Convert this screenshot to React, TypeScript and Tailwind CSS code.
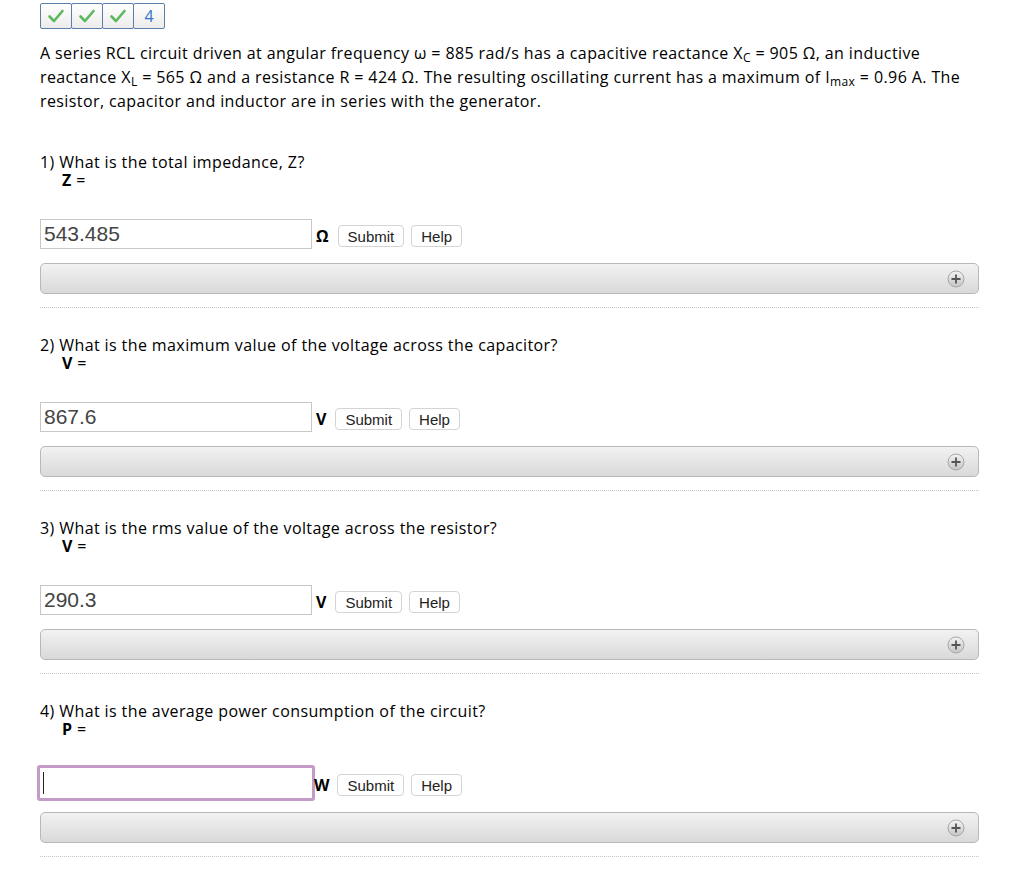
import React from "react";

const font = { fontFamily: '"Open Sans", "Noto Sans", sans-serif' };
const arial = { fontFamily: '"Liberation Sans", Arial, sans-serif' };

const Check = () => (
  <svg width="18" height="16" viewBox="0 0 18 16">
    <path d="M2.5 8.5 L7 13 L15.5 3" fill="none" stroke="#5cb85c" strokeWidth="2.6" strokeLinecap="round" strokeLinejoin="round" />
  </svg>
);

const Progress = () => (
  <div className="flex h-[26px] pl-[40px] pt-[3px] box-content">
    {[0, 1, 2].map((i) => (
      <div
        key={i}
        className="w-[32px] h-[26px] -ml-px first:ml-0 flex items-center justify-center border-[1.5px] border-[#5b7fa6] rounded-[2px] bg-gradient-to-b from-white to-[#ececec]"
      >
        <Check />
      </div>
    ))}
    <div className="w-[32px] h-[26px] -ml-px flex items-center justify-center border-[1.5px] border-[#5b7fa6] rounded-[2px] bg-gradient-to-b from-white to-[#ececec] text-[16px] text-[#3574c4]">
      4
    </div>
  </div>
);

const PlusIcon = () => (
  <svg width="18" height="18" viewBox="0 0 18 18">
    <defs>
      <linearGradient id="pg" x1="0" y1="0" x2="0" y2="1">
        <stop offset="0" stopColor="#f4f4f4" />
        <stop offset="1" stopColor="#c4c4c4" />
      </linearGradient>
    </defs>
    <circle cx="9" cy="9" r="8" fill="url(#pg)" stroke="#a8a8a8" strokeWidth="1" />
    <path d="M9 4.5 V13.5 M4.5 9 H13.5" stroke="#555" strokeWidth="1.8" />
  </svg>
);

type Q = {
  n: number;
  text: string;
  sym: string;
  value: string;
  unit: string;
  focused?: boolean;
};

const questions: Q[] = [
  { n: 1, text: "What is the total impedance, Z?", sym: "Z", value: "543.485", unit: "Ω" },
  { n: 2, text: "What is the maximum value of the voltage across the capacitor?", sym: "V", value: "867.6", unit: "V" },
  { n: 3, text: "What is the rms value of the voltage across the resistor?", sym: "V", value: "290.3", unit: "V" },
  { n: 4, text: "What is the average power consumption of the circuit?", sym: "P", value: "", unit: "W", focused: true },
];

const Question = ({ q }: { q: Q }) => (
  <div className="pt-[28px]">
    <p className="text-[16px] leading-[18px] text-black tracking-[0.4px]">
      {q.n}) {q.text}
    </p>
    <p className="text-[16px] leading-[18px] text-black pl-[22px] tracking-[0.4px]">
      <span className="font-bold">{q.sym}</span> =
    </p>

    {/* Answer row */}
    <div className="flex items-center h-[30px] mt-[30px]">
      {q.focused ? (
        <div className="w-[272px] h-[30px] flex items-center">
          <div className="-mx-[3px] w-[278px] h-[36px] rounded-[3px] border-[3px] border-[#c39bc6] bg-white flex items-center pl-[3px]">
            <div className="w-px h-[22px] bg-[#222]" />
          </div>
        </div>
      ) : (
        <div className="w-[272px] h-[30px] border border-[#c8c8c8] bg-white flex items-center pl-[3px] text-[21px] text-[#444]" style={arial}>
          {q.value}
        </div>
      )}
      <span className={`mt-[4px] font-bold text-[16px] text-black ${q.focused ? "ml-[2px] mr-[8px]" : "ml-[4px] mr-[9px]"}`}>
        {q.unit}
      </span>
      <button className="mt-[4px] h-[22px] px-[9px] rounded-[4px] border border-[#d4d4d4] bg-white text-[15px] text-[#222] leading-none" style={arial}>
        Submit
      </button>
      <button className="mt-[4px] ml-[7px] h-[22px] px-[9px] rounded-[4px] border border-[#d4d4d4] bg-white text-[15px] text-[#222] leading-none" style={arial}>
        Help
      </button>
    </div>

    {/* Hint bar */}
    <div className="mt-[14px] h-[31px] rounded-[5px] border border-[#b8b8b8] bg-gradient-to-b from-[#f2f2f2] to-[#d9d9d9] flex items-center justify-end pr-[13px]">
      <PlusIcon />
    </div>

    <div className="mt-[13px] border-t border-dotted border-[#c4c4c4]" />
  </div>
);

export default function App() {
  return (
    <main className="w-[1024px] h-[890px] bg-white overflow-hidden" style={font}>
      <Progress />
      <div className="pl-[40px] pr-[45px]">
        <p className="mt-[12px] text-[16px] leading-[24px] text-black tracking-[0.4px]">
          A series RCL circuit driven at angular frequency ω = 885 rad/s has a capacitive reactance X
          <sub className="text-[12px] leading-none">C</sub> = 905 Ω, an inductive reactance X
          <sub className="text-[12px] leading-none">L</sub> = 565 Ω and a resistance R = 424 Ω. The resulting oscillating
          current has a maximum of I<sub className="text-[12px] leading-none">max</sub> = 0.96 A. The resistor, capacitor and
          inductor are in series with the generator.
        </p>
        <div className="mt-[12px]">
          {questions.map((q) => (
            <Question key={q.n} q={q} />
          ))}
        </div>
      </div>
    </main>
  );
}
